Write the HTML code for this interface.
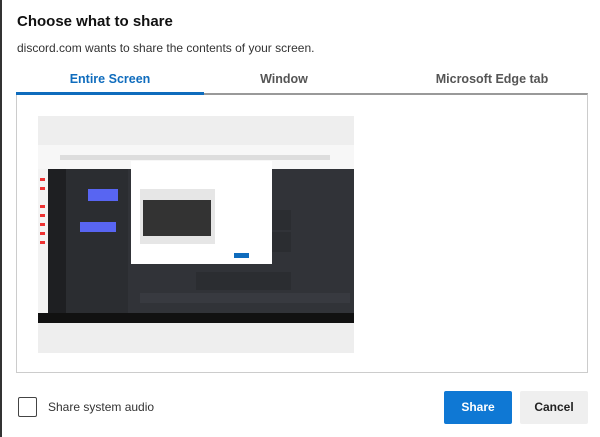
<!DOCTYPE html>
<html><head><style>
*{margin:0;padding:0;box-sizing:border-box}
body{width:600px;height:437px;background:#fff;font-family:"Liberation Sans",Arial,sans-serif;position:relative;overflow:hidden}
.a{position:absolute}
.r{position:absolute;left:40px;width:5px;height:3px;background:#e33}
</style></head><body>
<div class="a" style="left:0;top:0;width:2px;height:437px;background:#333"></div>
<div class="a" style="left:17px;top:13px;font-size:15px;font-weight:bold;color:#111">Choose what to share</div>
<div class="a" style="left:17px;top:41px;font-size:12px;color:#333">discord.com wants to share the contents of your screen.</div>
<div class="a" style="left:16px;top:72px;width:188px;text-align:center;font-size:12.5px;font-weight:bold;color:#0f6cbd">Entire Screen</div>
<div class="a" style="left:204px;top:72px;width:160px;text-align:center;font-size:12.5px;font-weight:bold;color:#555">Window</div>
<div class="a" style="left:396px;top:72px;width:192px;text-align:center;font-size:12.5px;font-weight:bold;color:#555">Microsoft Edge tab</div>
<div class="a" style="left:16px;top:93px;width:572px;height:280px;border:1px solid #ccc;border-top:2px solid #999"></div>
<div class="a" style="left:16px;top:92px;width:188px;height:3px;background:#0f6cbd"></div>
<div class="a" style="left:38px;top:116px;width:316px;height:237px;background:#eee"></div>
<div class="a" style="left:38px;top:145px;width:316px;height:24px;background:#f7f7f7"></div>
<div class="a" style="left:60px;top:155px;width:270px;height:5px;background:#ddd"></div>
<div class="a" style="left:38px;top:169px;width:316px;height:144px;background:#313338"></div>
<div class="a" style="left:38px;top:169px;width:10px;height:144px;background:#f3f3f3"></div>
<div class="r" style="top:178px"></div><div class="r" style="top:187px"></div><div class="r" style="top:205px"></div><div class="r" style="top:214px"></div><div class="r" style="top:223px"></div><div class="r" style="top:232px"></div><div class="r" style="top:241px"></div>
<div class="a" style="left:48px;top:169px;width:18px;height:144px;background:#1e1f22"></div>
<div class="a" style="left:66px;top:169px;width:62px;height:144px;background:#2b2d31"></div>
<div class="a" style="left:88px;top:189px;width:30px;height:12px;background:#5865f2"></div>
<div class="a" style="left:80px;top:222px;width:36px;height:10px;background:#5865f2"></div>
<div class="a" style="left:196px;top:210px;width:95px;height:20px;background:#2b2d31"></div>
<div class="a" style="left:196px;top:232px;width:95px;height:20px;background:#2b2d31"></div>
<div class="a" style="left:196px;top:272px;width:95px;height:18px;background:#2b2d31"></div>
<div class="a" style="left:140px;top:293px;width:210px;height:10px;background:#383a40"></div>
<div class="a" style="left:131px;top:161px;width:141px;height:103px;background:#fff"></div>
<div class="a" style="left:140px;top:189px;width:75px;height:55px;background:#e6e6e6"></div>
<div class="a" style="left:143px;top:200px;width:68px;height:36px;background:#333"></div>
<div class="a" style="left:234px;top:253px;width:15px;height:5px;background:#0f6cbd"></div>
<div class="a" style="left:38px;top:313px;width:316px;height:10px;background:#111"></div>
<div class="a" style="left:18px;top:397px;width:19px;height:20px;border:1.5px solid #444;border-radius:2px"></div>
<div class="a" style="left:48px;top:400px;font-size:12px;color:#333">Share system audio</div>
<div class="a" style="left:444px;top:391px;width:68px;height:33px;background:#0f78d4;border-radius:2px;color:#fff;font-size:12px;font-weight:bold;text-align:center;line-height:33px">Share</div>
<div class="a" style="left:520px;top:391px;width:68px;height:33px;background:#efefef;border-radius:2px;color:#222;font-size:12px;font-weight:bold;text-align:center;line-height:33px">Cancel</div>
</body></html>
